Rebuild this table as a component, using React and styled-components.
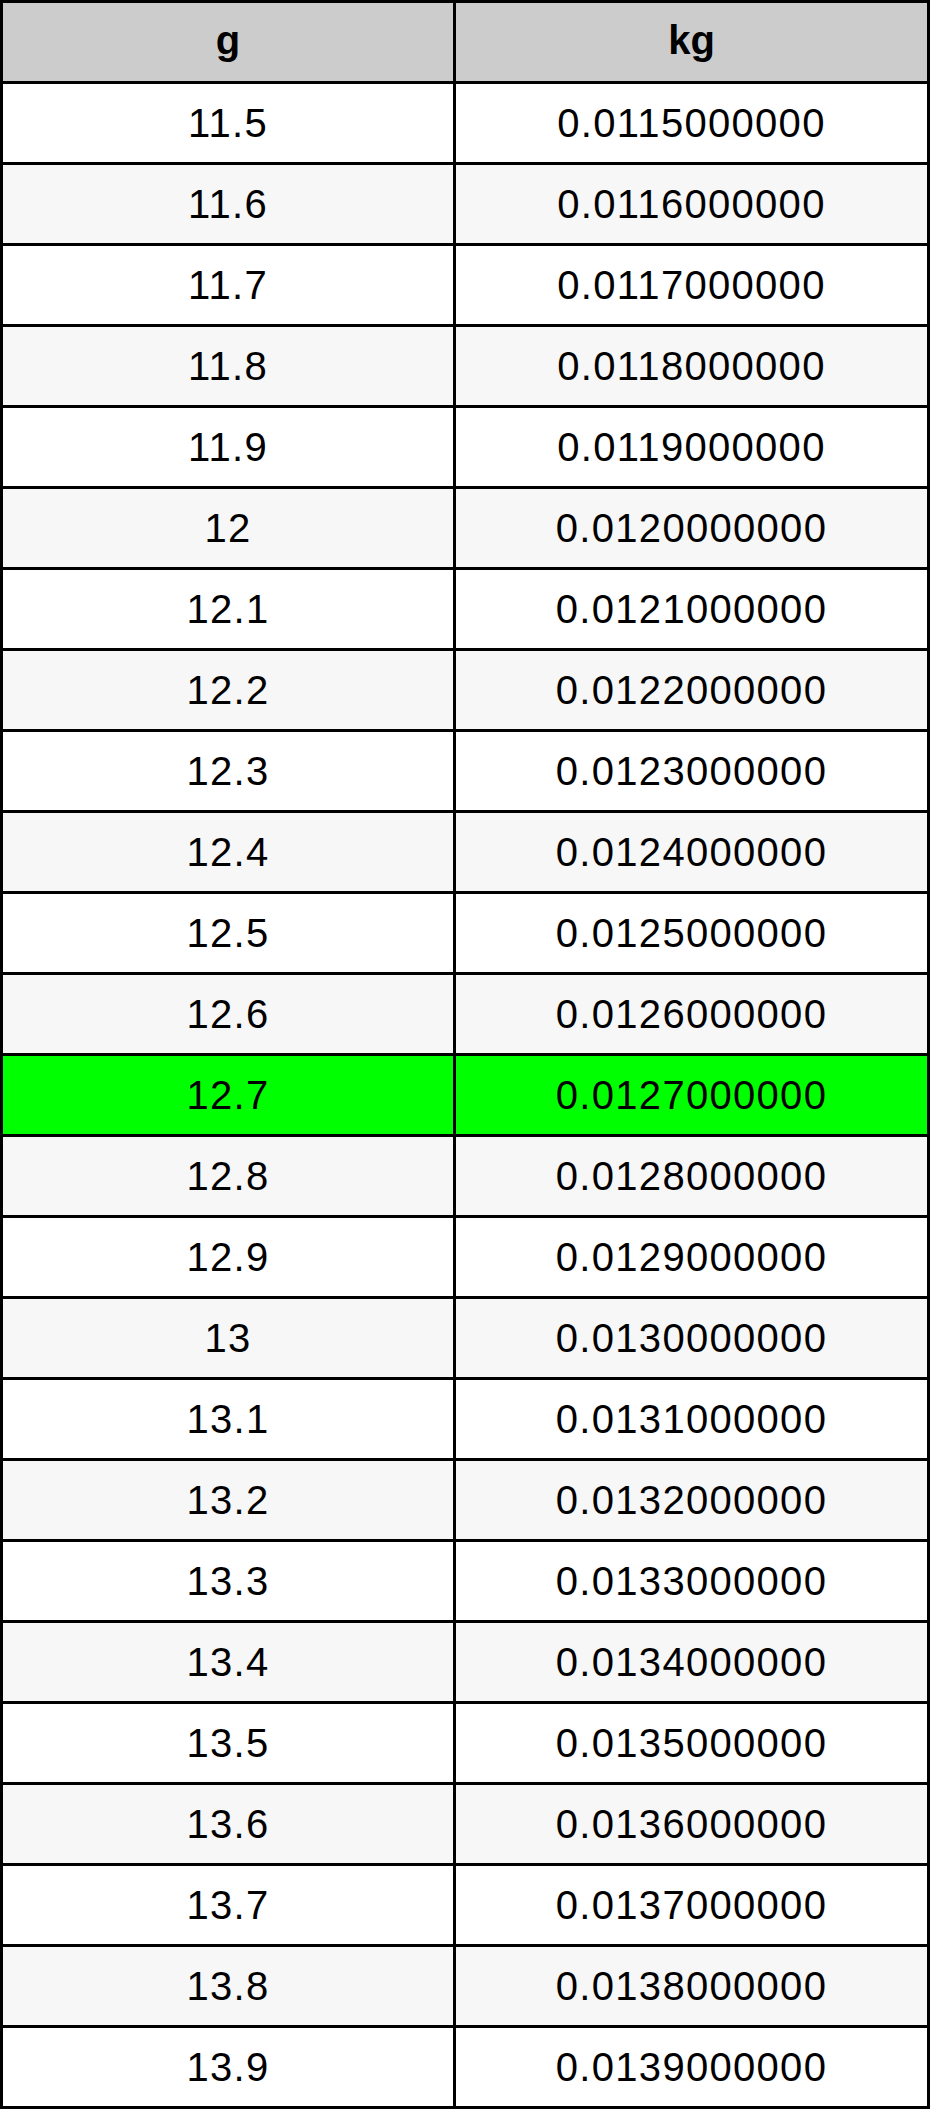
import React from "react";
import styled, { createGlobalStyle } from "styled-components";

const Global = createGlobalStyle`
  html, body { margin: 0; padding: 0; background: #ffffff; }
  body { font-family: "Liberation Sans", Arial, sans-serif; }
`;

const Table = styled.div`
  display: grid;
  grid-template-columns: 450px 471px;
  grid-auto-rows: 78px;
  gap: 3px;
  padding: 3px;
  width: 930px;
  box-sizing: border-box;
  background: #000000;
`;

const Cell = styled.div`
  display: flex;
  align-items: center;
  justify-content: center;
  background: ${(p) => p.$bg};
  color: #000000;
  font-size: 40px;
  font-weight: ${(p) => (p.$head ? 700 : 400)};
  letter-spacing: ${(p) => (p.$head ? "0" : "1.3px")};
  line-height: 1;
  padding-bottom: ${(p) => (p.$head ? "4px" : "0")};
  box-sizing: border-box;
`;

const rows = [];
for (let i = 115; i <= 139; i++) {
  const g = i % 10 === 0 ? String(i / 10) : (i / 10).toFixed(1);
  const kg = (i / 10000).toFixed(10);
  rows.push({ g, kg, hl: i === 127 });
}

export default function App() {
  return (
    <>
      <Global />
      <Table>
        <Cell $head $bg="#cccccc">g</Cell>
        <Cell $head $bg="#cccccc">kg</Cell>
        {rows.map((r, idx) => {
          const bg = r.hl ? "#00ff00" : idx % 2 === 0 ? "#ffffff" : "#f7f7f7";
          return (
            <React.Fragment key={r.g}>
              <Cell $bg={bg}>{r.g}</Cell>
              <Cell $bg={bg}>{r.kg}</Cell>
            </React.Fragment>
          );
        })}
      </Table>
    </>
  );
}
